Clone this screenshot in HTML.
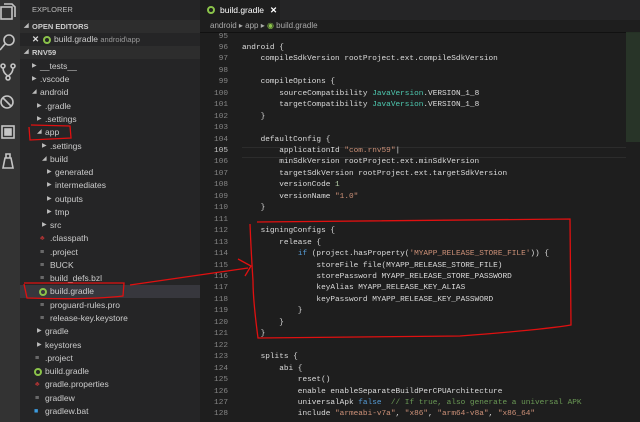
<!DOCTYPE html><html><head><style>
*{margin:0;padding:0;box-sizing:border-box}
body{width:640px;height:422px;overflow:hidden;background:#1e1e1e;position:relative;font-family:"Liberation Sans",sans-serif;color:#ccc}
#act{position:absolute;left:0;top:0;width:20px;height:422px;background:#333}
#side{position:absolute;left:20px;top:0;width:180px;height:422px;background:#252526}
.r{position:absolute;left:0;width:180px;height:13px;font-size:8.5px;line-height:13px;color:#ccc;white-space:nowrap}
.a{position:absolute;font-size:6px;color:#bbb}
.f{position:absolute;font-size:7px;color:#aaa}
.g{position:absolute;width:8px;height:8px;border-radius:50%;border:2px solid #8bc34a;top:2.5px}
#tabs{position:absolute;left:200px;top:0;width:440px;height:20px;background:#252526}
#tab{position:absolute;left:0;top:0;width:80px;height:20px;background:#1e1e1e;font-size:8.5px;line-height:20px;color:#fff;padding-left:20px;white-space:nowrap}
#bc{position:absolute;left:200px;top:20px;width:440px;height:13px;font-size:8px;line-height:12px;color:#aaa;padding-left:10px;border-bottom:1px solid #111}
#code{position:absolute;left:200px;top:31.5px;font-family:"Liberation Mono",monospace;font-size:7.75px;line-height:11.45px;white-space:pre;color:#dcdcdc}
.ln{display:inline-block;width:28px;text-align:right;color:#858585;margin-right:14px}
.cur{color:#c6c6c6}
.s{color:#ce9178}.t{color:#4ec9b0}.k{color:#569cd6}.n{color:#b5cea8}.c{color:#6a9955}
#mini{position:absolute;left:626px;top:32px;width:14px;height:110px;background:#2a3a2a;opacity:.8}
</style></head><body>
<div id="act">
<svg width="20" height="180" fill="none" stroke="#c5c5c5" stroke-width="1.6">
<rect x="1" y="7" width="11" height="12"/><path d="M4 4h8l3 3v10"/>
<circle cx="9" cy="40" r="5"/><path d="M5 44l-5 6"/>
<circle cx="3" cy="66" r="2"/><circle cx="13" cy="66" r="2"/><circle cx="8" cy="78" r="2"/><path d="M3 68q0 5 5 8M13 68q0 5-5 8"/>
<circle cx="7" cy="102" r="6"/><path d="M3 98l8 8"/>
<rect x="2" y="126" width="12" height="12"/><rect x="5" y="129" width="6" height="6" fill="#c5c5c5"/>
<path d="M3 168h10l-2-10h-6z"/><path d="M6 158v-4h4v4"/>
</svg></div>
<div id="side">
<div class="r" style="top:3px;left:12px;font-size:7.5px;color:#bbb">EXPLORER</div>
<div class="r" style="top:20px;background:#2d2d2d;font-weight:bold;font-size:7.5px;padding-left:12px"><span class="a" style="left:4px">◢</span>OPEN EDITORS</div>
<div class="r" style="top:33px"><span style="position:absolute;left:12px;font-weight:bold;color:#ddd">✕</span><span class="g" style="left:23px"></span><span style="position:absolute;left:34px">build.gradle <span style="color:#999;font-size:7.5px">android\app</span></span></div>
<div class="r" style="top:46px;background:#2d2d2d;font-weight:bold;font-size:7.5px;padding-left:12px"><span class="a" style="left:4px">◢</span>RNV59</div>
<div class="r" style="top:60px"><span class="a" style="left:12px">▶</span><span style="position:absolute;left:20px">__tests__</span></div>
<div class="r" style="top:73px"><span class="a" style="left:12px">▶</span><span style="position:absolute;left:20px">.vscode</span></div>
<div class="r" style="top:86px"><span class="a" style="left:12px">◢</span><span style="position:absolute;left:20px">android</span></div>
<div class="r" style="top:100px"><span class="a" style="left:17px">▶</span><span style="position:absolute;left:25px">.gradle</span></div>
<div class="r" style="top:113px"><span class="a" style="left:17px">▶</span><span style="position:absolute;left:25px">.settings</span></div>
<div class="r" style="top:126px"><span class="a" style="left:17px">◢</span><span style="position:absolute;left:25px">app</span></div>
<div class="r" style="top:140px"><span class="a" style="left:22px">▶</span><span style="position:absolute;left:30px">.settings</span></div>
<div class="r" style="top:153px"><span class="a" style="left:22px">◢</span><span style="position:absolute;left:30px">build</span></div>
<div class="r" style="top:166px"><span class="a" style="left:27px">▶</span><span style="position:absolute;left:35px">generated</span></div>
<div class="r" style="top:179px"><span class="a" style="left:27px">▶</span><span style="position:absolute;left:35px">intermediates</span></div>
<div class="r" style="top:193px"><span class="a" style="left:27px">▶</span><span style="position:absolute;left:35px">outputs</span></div>
<div class="r" style="top:206px"><span class="a" style="left:27px">▶</span><span style="position:absolute;left:35px">tmp</span></div>
<div class="r" style="top:219px"><span class="a" style="left:22px">▶</span><span style="position:absolute;left:30px">src</span></div>
<div class="r" style="top:232px"><span class="f" style="left:20px;color:#a33">♣</span><span style="position:absolute;left:30px">.classpath</span></div>
<div class="r" style="top:246px"><span class="f" style="left:20px">≡</span><span style="position:absolute;left:30px">.project</span></div>
<div class="r" style="top:259px"><span class="f" style="left:20px">≡</span><span style="position:absolute;left:30px">BUCK</span></div>
<div class="r" style="top:272px"><span class="f" style="left:20px">≡</span><span style="position:absolute;left:30px">build_defs.bzl</span></div>
<div class="r" style="top:285px;background:#37373d"><span class="g" style="left:19px"></span><span style="position:absolute;left:30px">build.gradle</span></div>
<div class="r" style="top:299px"><span class="f" style="left:20px">≡</span><span style="position:absolute;left:30px">proguard-rules.pro</span></div>
<div class="r" style="top:312px"><span class="f" style="left:20px">≡</span><span style="position:absolute;left:30px">release-key.keystore</span></div>
<div class="r" style="top:325px"><span class="a" style="left:17px">▶</span><span style="position:absolute;left:25px">gradle</span></div>
<div class="r" style="top:339px"><span class="a" style="left:17px">▶</span><span style="position:absolute;left:25px">keystores</span></div>
<div class="r" style="top:352px"><span class="f" style="left:15px">≡</span><span style="position:absolute;left:25px">.project</span></div>
<div class="r" style="top:365px"><span class="g" style="left:14px"></span><span style="position:absolute;left:25px">build.gradle</span></div>
<div class="r" style="top:378px"><span class="f" style="left:15px;color:#a33">♣</span><span style="position:absolute;left:25px">gradle.properties</span></div>
<div class="r" style="top:392px"><span class="f" style="left:15px">≡</span><span style="position:absolute;left:25px">gradlew</span></div>
<div class="r" style="top:405px"><span class="f" style="left:14px;color:#3c9ce0">■</span><span style="position:absolute;left:25px">gradlew.bat</span></div>
</div>
<div id="tabs"><div id="tab"><span class="g" style="left:7px;top:6px"></span>build.gradle<span style="margin-left:6px;font-weight:bold">✕</span></div></div>
<div id="bc">android ▸ app ▸ <span style="color:#8bc34a">◉</span> build.gradle</div>
<div style="position:absolute;left:242px;top:146.5px;width:384px;height:11.5px;border-top:1px solid #2c2c2c;border-bottom:1px solid #2c2c2c"></div>
<div id="code"><span class="ln">95</span>
<span class="ln">96</span>android {
<span class="ln">97</span>    compileSdkVersion rootProject.ext.compileSdkVersion
<span class="ln">98</span>
<span class="ln">99</span>    compileOptions {
<span class="ln">100</span>        sourceCompatibility <span class="t">JavaVersion</span>.VERSION_1_8
<span class="ln">101</span>        targetCompatibility <span class="t">JavaVersion</span>.VERSION_1_8
<span class="ln">102</span>    }
<span class="ln">103</span>
<span class="ln">104</span>    defaultConfig {
<span class="ln cur">105</span>        applicationId <span class="s">"com.rnv59"</span>|
<span class="ln">106</span>        minSdkVersion rootProject.ext.minSdkVersion
<span class="ln">107</span>        targetSdkVersion rootProject.ext.targetSdkVersion
<span class="ln">108</span>        versionCode <span class="n">1</span>
<span class="ln">109</span>        versionName <span class="s">"1.0"</span>
<span class="ln">110</span>    }
<span class="ln">111</span>
<span class="ln">112</span>    signingConfigs {
<span class="ln">113</span>        release {
<span class="ln">114</span>            <span class="k">if</span> (project.hasProperty(<span class="s">'MYAPP_RELEASE_STORE_FILE'</span>)) {
<span class="ln">115</span>                storeFile file(MYAPP_RELEASE_STORE_FILE)
<span class="ln">116</span>                storePassword MYAPP_RELEASE_STORE_PASSWORD
<span class="ln">117</span>                keyAlias MYAPP_RELEASE_KEY_ALIAS
<span class="ln">118</span>                keyPassword MYAPP_RELEASE_KEY_PASSWORD
<span class="ln">119</span>            }
<span class="ln">120</span>        }
<span class="ln">121</span>    }
<span class="ln">122</span>
<span class="ln">123</span>    splits {
<span class="ln">124</span>        abi {
<span class="ln">125</span>            reset()
<span class="ln">126</span>            enable enableSeparateBuildPerCPUArchitecture
<span class="ln">127</span>            universalApk <span class="k">false</span>  <span class="c">// If true, also generate a universal APK</span>
<span class="ln">128</span>            include <span class="s">"armeabi-v7a"</span>, <span class="s">"x86"</span>, <span class="s">"arm64-v8a"</span>, <span class="s">"x86_64"</span></div>
<div id="mini"></div>
<svg style="position:absolute;left:0;top:0" width="640" height="422" fill="none" stroke="#e01010" stroke-width="1.3">
<path d="M31 125L70 126L71 138L30 140L29 127"/>
<path d="M24 283L124 283L123 296Q90 300 27 298L24 284"/>
<path d="M130 285L248 268"/>
<path d="M238 259L251 266L245 276"/>
<path d="M257 222L570 219L571 325Q540 330 460 336L258 338Q253 300 253 281Q251 250 250 224"/>
</svg>
</body></html>
